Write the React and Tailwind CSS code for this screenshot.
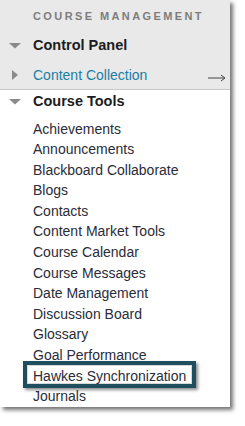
import React from "react";

const items = [
  "Achievements",
  "Announcements",
  "Blackboard Collaborate",
  "Blogs",
  "Contacts",
  "Content Market Tools",
  "Course Calendar",
  "Course Messages",
  "Date Management",
  "Discussion Board",
  "Glossary",
  "Goal Performance",
  "Hawkes Synchronization",
  "Journals",
];

function Down() {
  return (
    <svg width="12" height="6" viewBox="0 0 12 6" className="block">
      <polygon points="0,0 12,0 6,5.5" fill="#8a8a8a" />
    </svg>
  );
}

function Right() {
  return (
    <svg width="6" height="10" viewBox="0 0 6 10" className="block ml-[3px]">
      <polygon points="0,0 6,5 0,10" fill="#8a8a8a" />
    </svg>
  );
}

export default function App() {
  return (
    <div className="w-[245px] h-[426px] bg-white overflow-hidden font-['Liberation_Sans',Arial,sans-serif]">
      <div className="w-[230px] bg-white shadow-[3px_3px_4px_rgba(0,0,0,0.55)]">
        <div className="bg-[#e9e9e9] border-b border-[#c9c9c9]">
          <div className="h-[32px] flex items-center pl-[33px] text-[11px] font-bold tracking-[2.4px] text-[#7d7d7d] leading-none">
            COURSE MANAGEMENT
          </div>
          <div className="h-[27px] pt-[1px] flex items-center pl-[9px]">
            <div className="w-[24px]">
              <Down />
            </div>
            <span className="text-[14.5px] font-bold text-[#1c1c1c]">Control Panel</span>
          </div>
          <div className="h-[30px] pt-[2px] flex items-center pl-[9px] pr-[4px]">
            <div className="w-[24px]">
              <Right />
            </div>
            <span className="text-[14px] text-[#1b7ea3] flex-1">Content Collection</span>
            <svg width="18" height="8" viewBox="0 0 18 8" className="block mt-[6px]">
              <line x1="0" y1="4" x2="16.5" y2="4" stroke="#444" strokeWidth="1" />
              <path d="M13 1 L17 4 L13 7" fill="none" stroke="#444" strokeWidth="1" />
            </svg>
          </div>
        </div>
        <div className="h-[24px] flex items-center pl-[9px]">
          <div className="w-[24px]">
            <Down />
          </div>
          <span className="text-[14.5px] font-bold text-[#1c1c1c]">Course Tools</span>
        </div>
        <ul className="pt-[4.5px] pl-[33px]">
          {items.map((it) => (
            <li
              key={it}
              className="relative h-[20.6px] leading-[20.6px] text-[14px] text-[#2a2c38] whitespace-nowrap"
            >
              {it === "Hawkes Synchronization" && (
                <div className="absolute left-[-10px] top-[-4.7px] w-[173px] h-[27px] border-4 border-[#1f4f5f] shadow-[2px_2px_3px_rgba(0,0,0,0.45)]">
                  <div className="w-full h-full border border-[#d8d8d8]" />
                </div>
              )}
              <span className="relative">{it}</span>
            </li>
          ))}
        </ul>
      </div>
    </div>
  );
}
